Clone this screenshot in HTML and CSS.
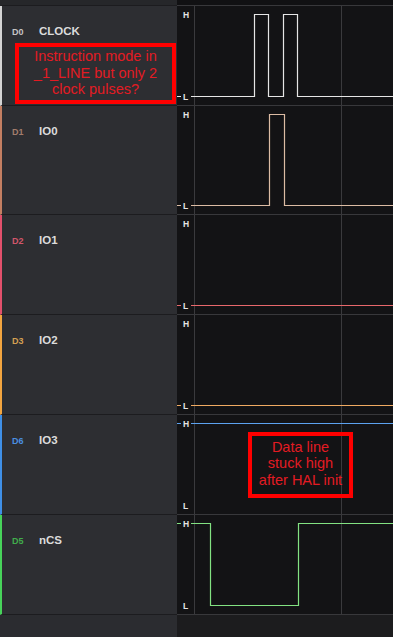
FILE: index.html
```html
<!DOCTYPE html>
<html lang="en">

<head>
    <meta charset="UTF-8">
    <meta name="viewport" content="width=device-width, initial-scale=1.0">
    <title>Logic analyzer - QSPI</title>
    <link rel="stylesheet" href="styles.css">
</head>

<body>
    <div class="capture">
        <div class="row top">
            <div class="panel"></div>
            <div class="wave"></div>
        </div>

        <div class="row">
            <div class="panel ch-d0">
                <span class="num">D0</span><span class="name">CLOCK</span>
            </div>
            <div class="wave">
                <svg width="216" height="99">
                    <line class="grid" x1="17.5" y1="0" x2="17.5" y2="99" />
                    <line class="grid" x1="164.5" y1="0" x2="164.5" y2="99" />
                    <path class="sig s-d0" d="M0 90.5 H77.5 V8.5 H91.5 V90.5 H106.5 V8.5 H120.5 V90.5 H216" />
                    <rect class="lbg" x="4" y="85" width="10" height="11" />
                    <text class="lvl" x="6" y="11.5">H</text>
                    <text class="lvl" x="6" y="93.5">L</text>
                </svg>
            </div>
        </div>

        <div class="row">
            <div class="panel tall ch-d1">
                <span class="num">D1</span><span class="name">IO0</span>
            </div>
            <div class="wave">
                <svg width="216" height="108">
                    <line class="grid" x1="17.5" y1="0" x2="17.5" y2="108" />
                    <line class="grid" x1="164.5" y1="0" x2="164.5" y2="108" />
                    <path class="sig s-d1" d="M0 99.5 H92.5 V8.5 H107.5 V99.5 H216" />
                    <rect class="lbg" x="4" y="94" width="10" height="11" />
                    <text class="lvl" x="6" y="11.5">H</text>
                    <text class="lvl" x="6" y="102.5">L</text>
                </svg>
            </div>
        </div>

        <div class="row">
            <div class="panel ch-d2">
                <span class="num">D2</span><span class="name">IO1</span>
            </div>
            <div class="wave">
                <svg width="216" height="99">
                    <line class="grid" x1="17.5" y1="0" x2="17.5" y2="99" />
                    <line class="grid" x1="164.5" y1="0" x2="164.5" y2="99" />
                    <path class="sig s-d2" d="M0 90.5 H216" />
                    <rect class="lbg" x="4" y="85" width="10" height="11" />
                    <text class="lvl" x="6" y="11.5">H</text>
                    <text class="lvl" x="6" y="93.5">L</text>
                </svg>
            </div>
        </div>

        <div class="row">
            <div class="panel ch-d3">
                <span class="num">D3</span><span class="name">IO2</span>
            </div>
            <div class="wave">
                <svg width="216" height="99">
                    <line class="grid" x1="17.5" y1="0" x2="17.5" y2="99" />
                    <line class="grid" x1="164.5" y1="0" x2="164.5" y2="99" />
                    <path class="sig s-d3" d="M0 90.5 H216" />
                    <rect class="lbg" x="4" y="85" width="10" height="11" />
                    <text class="lvl" x="6" y="11.5">H</text>
                    <text class="lvl" x="6" y="93.5">L</text>
                </svg>
            </div>
        </div>

        <div class="row">
            <div class="panel ch-d6">
                <span class="num">D6</span><span class="name">IO3</span>
            </div>
            <div class="wave">
                <svg width="216" height="99">
                    <line class="grid" x1="17.5" y1="0" x2="17.5" y2="99" />
                    <line class="grid" x1="164.5" y1="0" x2="164.5" y2="99" />
                    <path class="sig s-d6" d="M0 8.5 H216" />
                    <rect class="lbg" x="4" y="3" width="10" height="11" />
                    <text class="lvl" x="6" y="11.5">H</text>
                    <text class="lvl" x="6" y="93.5">L</text>
                </svg>
            </div>
        </div>

        <div class="row">
            <div class="panel ch-d5">
                <span class="num">D5</span><span class="name">nCS</span>
            </div>
            <div class="wave">
                <svg width="216" height="99">
                    <line class="grid" x1="17.5" y1="0" x2="17.5" y2="99" />
                    <line class="grid" x1="164.5" y1="0" x2="164.5" y2="99" />
                    <path class="sig s-d5" d="M0 8.5 H33.5 V90.5 H121.5 V8.5 H216" />
                    <rect class="lbg" x="4" y="3" width="10" height="11" />
                    <text class="lvl" x="6" y="11.5">H</text>
                    <text class="lvl" x="6" y="93.5">L</text>
                </svg>
            </div>
        </div>

        <div class="row bottom">
            <div class="panel"></div>
            <div class="wave"></div>
        </div>

        <!-- notes drawn over the capture -->
        <div class="note note-clock">Instruction mode in _1_LINE but only 2 clock pulses?</div>
        <div class="note note-io3">Data line stuck high after HAL init</div>
    </div>
</body>

</html>
```

FILE: styles.css
```css
body {
    margin: 0;
    background-color: #131315;
    font-family: "Liberation Sans", Arial, sans-serif;
}

.capture {
    position: relative;
    width: 393px;
    height: 637px;
    overflow: hidden;
    display: flex;
    flex-direction: column;
}

.row {
    display: grid;
    grid-template-columns: 177px 216px;
}

.panel {
    height: 100px;
    box-sizing: border-box;
    background: #2d2e32;
    border-bottom: 1px solid #1c1c1f;
    border-left: 2px solid #2d2e32;
    display: flex;
    align-items: baseline;
    padding: 18px 0 0 10px;
}

.panel.tall {
    height: 109px;
}

.wave {
    background: #131315;
    border-bottom: 1px solid #38383b;
    line-height: 0;
}

.wave svg {
    display: block;
}

.top .panel {
    height: 6px;
    padding: 0;
    background: #26272a;
    border-left-color: #26272a;
}

.top .wave {
    height: 5px;
    background: #111113;
}

.bottom .panel {
    height: 23px;
    padding: 0;
    border-bottom: none;
    background: #2b2c30;
    border-left-color: #2b2c30;
}

.bottom .wave {
    height: 23px;
    border-bottom: none;
    background: #1c1c1e;
}

.num {
    width: 27px;
    font-size: 9px;
    font-weight: bold;
    line-height: 14px;
}

.name {
    font-size: 11.5px;
    font-weight: bold;
    line-height: 14px;
    color: #dcdcdc;
}

.ch-d0 { border-left-color: #d4d4d4; }
.ch-d0 .num { color: #c4c4c4; }
.ch-d1 { border-left-color: #c47f62; }
.ch-d1 .num { color: #a27d6c; }
.ch-d2 { border-left-color: #e2506c; }
.ch-d2 .num { color: #d2566a; }
.ch-d3 { border-left-color: #f2a540; }
.ch-d3 .num { color: #d4a052; }
.ch-d6 { border-left-color: #3f8fe6; }
.ch-d6 .num { color: #4a8fe0; }
.ch-d5 { border-left-color: #47d35a; }
.ch-d5 .num { color: #41ad4c; }

/* waveform parts */
.grid {
    stroke: #3a3a3d;
    stroke-width: 1;
}

.sig {
    fill: none;
    stroke-width: 1.2;
}

.s-d0 { stroke: #e6e6e6; }
.s-d1 { stroke: #dcbca4; }
.s-d2 { stroke: #e8686c; }
.s-d3 { stroke: #f0aa62; }
.s-d6 { stroke: #5ca2f0; }
.s-d5 { stroke: #82e282; }

.lbg {
    fill: #131315;
}

.lvl {
    font-family: "Liberation Sans", Arial, sans-serif;
    font-size: 8.5px;
    font-weight: bold;
    fill: #e4e4e4;
}

/* red annotations */
.note {
    position: absolute;
    box-sizing: border-box;
    border: 4px solid #ff0000;
    color: #e31b23;
    font-size: 14.5px;
    line-height: 16.5px;
    text-align: center;
    display: flex;
    align-items: center;
    justify-content: center;
}

.note-clock {
    left: 15px;
    top: 43px;
    width: 161px;
    height: 61px;
    padding: 0 4px 1px;
}

.note-io3 {
    left: 248px;
    top: 432px;
    width: 105px;
    height: 66px;
    padding: 0 6px 3px;
}
```
